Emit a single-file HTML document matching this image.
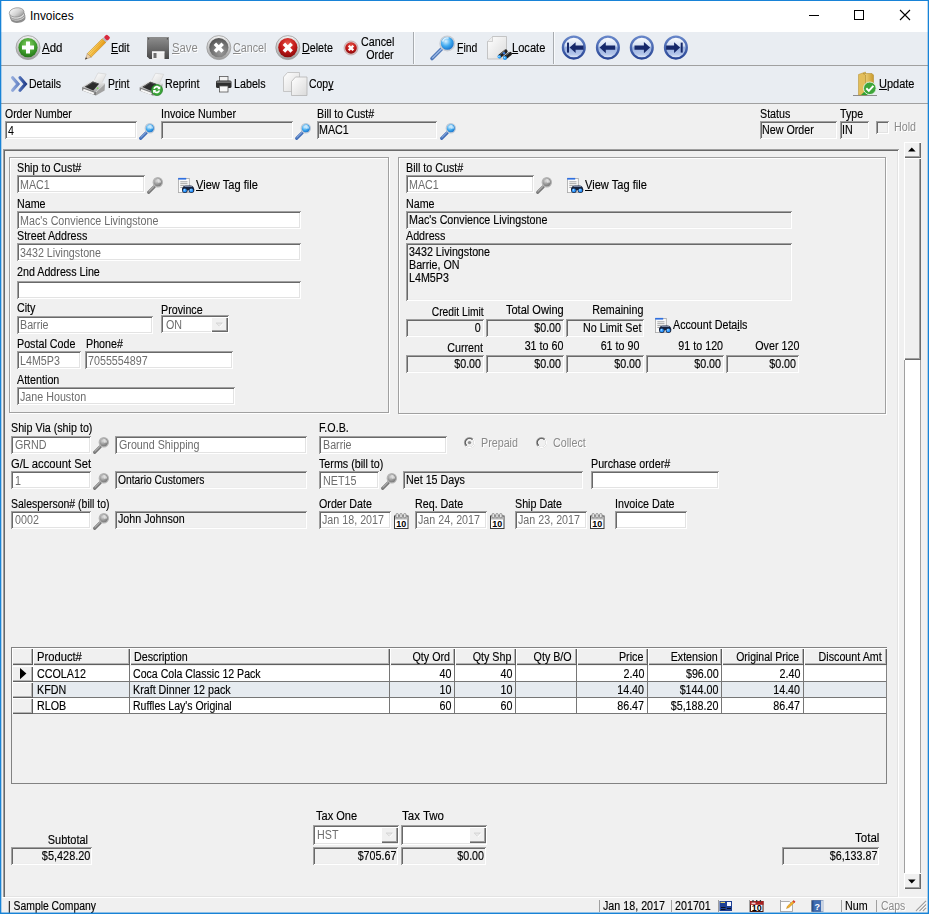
<!DOCTYPE html>
<html lang="en">
<head>
<meta charset="utf-8">
<title>Invoices</title>
<style>
html,body{margin:0;padding:0}
body{width:929px;height:914px;position:relative;overflow:hidden;background:#F0F0F0;font:12px "Liberation Sans",sans-serif;color:#000}
.a{position:absolute}
.t{-webkit-text-stroke:.15px;position:absolute;white-space:nowrap;line-height:14px;height:14px;transform:scaleX(.893);transform-origin:0 0}
.t.r{transform-origin:100% 0;text-align:right}
.t u{text-decoration:underline;text-underline-offset:1px;text-decoration-thickness:1px;text-decoration-skip-ink:none}
.dis{color:#6D6D6D}
.dt{color:#8A8A8A;text-shadow:1px 1px 0 #fff;-webkit-text-stroke:0}
svg{position:absolute;overflow:visible}
.in{position:absolute;height:18px;box-sizing:border-box;background:#fff;box-shadow:inset 1px 1px 0 #A0A0A0,inset -1px -1px 0 #fff,inset 2px 2px 0 #696969,inset -2px -2px 0 #E3E3E3}
.in.g{background:#F0F0F0;box-shadow:inset 1px 1px 0 #A0A0A0,inset -1px -1px 0 #fff,inset 2px 2px 0 #696969,inset -2px -2px 0 #EDEDED}
.in .t{color:#6D6D6D;-webkit-text-stroke:0}
.in.g .t{color:#000;-webkit-text-stroke:.15px}
.grp{position:absolute;box-sizing:border-box;border:1px solid #A0A0A0;box-shadow:1px 1px 0 #fff,inset 1px 1px 0 #fff}
.dd{position:absolute;width:17px;height:15px;box-sizing:border-box;background:#F0F0F0;box-shadow:inset 1px 1px 0 #fff,inset -1px -1px 0 #696969,inset -2px -2px 0 #A0A0A0}
.hc{position:absolute;top:648px;height:17px;box-sizing:border-box;background:#F0F0F0;box-shadow:inset 1px 1px 0 #fff,inset -1px -1px 0 #5E5E5E,inset -2px -2px 0 #B4B4B4}
.rc{position:absolute;height:16px;box-sizing:border-box;background:#F0F0F0;left:12px;width:21px;box-shadow:inset 1px 1px 0 #fff,inset -1px -1px 0 #5E5E5E,inset -2px -2px 0 #B4B4B4}
.row{position:absolute;left:33px;width:853px;height:16px;background:#fff;border-bottom:1px solid #767676;box-sizing:border-box}
.row.alt{background:#E6EBF0}
.vl{position:absolute;width:1px;background:#767676;top:665px;height:48px}
.sep{position:absolute;width:1px;background:#A0A0A0;top:900px;height:12px}
</style>
</head>
<body>
<!-- window frame -->
<div class="a" style="left:0;top:0;width:929px;height:32px;background:#fff"></div>
<div class="a" style="left:0;top:32px;width:929px;height:72px;background:#E9EDF2"></div>
<div class="a" style="left:0;top:65px;width:929px;height:1px;background:#A0A0A0"></div>
<div class="a" style="left:0;top:103px;width:929px;height:1px;background:#A0A0A0"></div>

<!-- TITLEBAR -->
<svg style="left:8px;top:6px" width="18" height="18" viewBox="0 0 18 18">
<defs><linearGradient id="cg" x1="0" y1="0" x2="1" y2="1"><stop offset="0" stop-color="#FFFFFF"/><stop offset=".55" stop-color="#D2D2D2"/><stop offset="1" stop-color="#8A8A8A"/></linearGradient></defs>
<g transform="rotate(-8 9 9)">
<ellipse cx="9.6" cy="12.8" rx="7.4" ry="4.2" fill="#8E8E8E"/>
<ellipse cx="9.4" cy="11" rx="7.4" ry="4.2" fill="#C9C9C9" stroke="#7E7E7E" stroke-width=".7"/>
<ellipse cx="9.2" cy="9" rx="7.4" ry="4.2" fill="#DDDDDD" stroke="#7E7E7E" stroke-width=".7"/>
<ellipse cx="9" cy="6.4" rx="7.4" ry="4.6" fill="url(#cg)" stroke="#8C8C8C" stroke-width=".7"/>
</g>
</svg>
<span class="a" style="left:30px;top:8px;line-height:16px;font-size:11.9px;white-space:nowrap">Invoices</span>
<svg style="left:809px;top:9px" width="102" height="12" viewBox="0 0 102 12">
<path d="M0 6.5H10" stroke="#000" stroke-width="1" fill="none"/>
<rect x="45.5" y="1.5" width="9" height="9" stroke="#000" stroke-width="1" fill="none"/>
<path d="M91 1L101 11M101 1L91 11" stroke="#000" stroke-width="1.1" fill="none"/>
</svg>

<!-- TOOLBAR 1 -->
<div id="tb1">
<svg style="left:0;top:0" width="929" height="104" viewBox="0 0 929 104">
<defs>
<linearGradient id="ring" x1="0" y1="0" x2="0" y2="1"><stop offset="0" stop-color="#F2F2F2"/><stop offset="1" stop-color="#9C9C9C"/></linearGradient>
<radialGradient id="grn" cx=".5" cy=".35" r=".7"><stop offset="0" stop-color="#8ED46A"/><stop offset=".6" stop-color="#3C9A2A"/><stop offset="1" stop-color="#1F6E14"/></radialGradient>
<radialGradient id="gry" cx=".6" cy=".75" r=".8"><stop offset="0" stop-color="#9A9A9A"/><stop offset=".6" stop-color="#707070"/><stop offset="1" stop-color="#4E4E4E"/></radialGradient><linearGradient id="flp" x1="0" y1="0" x2="0" y2="1"><stop offset="0" stop-color="#909090"/><stop offset="1" stop-color="#484848"/></linearGradient><linearGradient id="flq" x1="0" y1="0" x2="0" y2="1"><stop offset="0" stop-color="#8E8E8E"/><stop offset="1" stop-color="#6A6A6A"/></linearGradient>
<radialGradient id="red" cx=".5" cy=".3" r=".75"><stop offset="0" stop-color="#E8564A"/><stop offset=".55" stop-color="#C01818"/><stop offset="1" stop-color="#7E0808"/></radialGradient>
<linearGradient id="nav" x1="0" y1="0" x2="0" y2="1"><stop offset="0" stop-color="#FFFFFF"/><stop offset=".42" stop-color="#D2DEF2"/><stop offset=".5" stop-color="#98B0DE"/><stop offset=".8" stop-color="#B4C6EA"/><stop offset="1" stop-color="#EEF3FB"/></linearGradient><linearGradient id="navr" x1="0" y1="0" x2="0" y2="1"><stop offset="0" stop-color="#6685C8"/><stop offset="1" stop-color="#2A4796"/></linearGradient>
<radialGradient id="lens" cx=".4" cy=".35" r=".7"><stop offset="0" stop-color="#D8F1FF"/><stop offset=".5" stop-color="#3DA9F0"/><stop offset="1" stop-color="#0F63C0"/></radialGradient>
<radialGradient id="lensg" cx=".4" cy=".35" r=".7"><stop offset="0" stop-color="#DADADA"/><stop offset=".5" stop-color="#9A9A9A"/><stop offset="1" stop-color="#6C6C6C"/></radialGradient>
<linearGradient id="pg" x1="0" y1="0" x2="1" y2="1"><stop offset="0" stop-color="#FFFFFF"/><stop offset="1" stop-color="#DADADA"/></linearGradient>
<linearGradient id="pen" x1="0" y1="0" x2="1" y2="1"><stop offset="0" stop-color="#FFE07A"/><stop offset="1" stop-color="#E8960C"/></linearGradient>
<linearGradient id="fold" x1="0" y1="0" x2="1" y2="0"><stop offset="0" stop-color="#F6DC8A"/><stop offset="1" stop-color="#C99A2C"/></linearGradient>
</defs>
<!-- Add -->
<circle cx="28" cy="47.6" r="12" fill="url(#ring)" stroke="#9A9A9A" stroke-width=".8"/>
<circle cx="28" cy="47.6" r="9.6" fill="url(#grn)"/>
<path d="M26 41.6h4v4h4v4h-4v4h-4v-4h-4v-4h4z" fill="#fff"/>
<!-- Edit pencil -->
<g transform="translate(97 47.6) rotate(-45)">
<rect x="-11" y="-2.6" width="21" height="5.2" fill="url(#pen)" stroke="#B87A10" stroke-width=".5"/>
<path d="M-11 -1h21M-11 .9h21" stroke="#D89A20" stroke-width=".5"/>
<path d="M-11 -2.6L-16.5 0L-11 2.6z" fill="#EBCFA8" stroke="#9A7A50" stroke-width=".4"/>
<path d="M-14.6 -.9L-17 0L-14.6 .9z" fill="#333"/>
<rect x="10" y="-2.6" width="2" height="5.2" fill="#B8B8B8"/>
<rect x="12" y="-2.6" width="4.4" height="5.2" rx="1.4" fill="#D8283C"/>
</g>
<!-- Save -->
<path d="M147 37h22v22h-19.5l-2.5-2.5z" fill="url(#flp)"/>
<rect x="150.5" y="37" width="15" height="11.5" fill="url(#flq)"/>
<rect x="148" y="38" width="1.2" height="1.6" fill="#555"/><rect x="166.8" y="38" width="1.2" height="1.6" fill="#555"/>
<rect x="152" y="51.5" width="12.5" height="7.5" fill="#EFEFEF"/>
<rect x="152" y="51.5" width="12.5" height="1" fill="#fff"/>
<rect x="153.5" y="53" width="3" height="5" fill="#6E6E6E"/>
<!-- Cancel -->
<circle cx="218.8" cy="47.6" r="12" fill="url(#ring)" stroke="#9A9A9A" stroke-width=".8"/>
<circle cx="218.8" cy="47.6" r="9.6" fill="url(#gry)"/>
<path d="M214.9 43.7l7.8 7.8M222.7 43.7l-7.8 7.8" stroke="#fff" stroke-width="3.5"/>
<!-- Delete -->
<circle cx="287.8" cy="47.6" r="12" fill="url(#ring)" stroke="#9A9A9A" stroke-width=".8"/>
<circle cx="287.8" cy="47.6" r="9.6" fill="url(#red)"/>
<path d="M283.9 43.7l7.8 7.8M291.7 43.7l-7.8 7.8" stroke="#fff" stroke-width="3.5"/>
<!-- Cancel order -->
<circle cx="351" cy="48" r="7" fill="#E0C8C8" stroke="#B09090" stroke-width=".6"/>
<circle cx="351" cy="48" r="5.8" fill="url(#red)"/>
<path d="M348.7 45.7l4.6 4.6M353.3 45.7l-4.6 4.6" stroke="#fff" stroke-width="2.3"/>
<!-- separators -->
<rect x="413" y="32" width="1" height="32" fill="#A8ACB0"/><rect x="414" y="32" width="1" height="32" fill="#F8FAFC"/>
<rect x="553" y="32" width="1" height="32" fill="#A8ACB0"/><rect x="554" y="32" width="1" height="32" fill="#F8FAFC"/>
<!-- Find -->
<path d="M432 58.5L442.5 48" stroke="#4F78B8" stroke-width="3.6" stroke-linecap="round"/>
<path d="M432.6 57.9L442 48.5" stroke="#9DBBE6" stroke-width="1.2" stroke-linecap="round"/>
<circle cx="447.3" cy="43.4" r="7.2" fill="url(#lens)" stroke="#C9CDD4" stroke-width="1.6"/>
<path d="M442.6 41.5a5 5 0 0 1 6-3.4" stroke="#fff" stroke-width="1.4" fill="none" opacity=".8"/>
<!-- Locate -->
<path d="M492.5 36.5h14v22.5h-19v-17.5z" fill="url(#pg)" stroke="#B9B9B9" stroke-width=".8"/>
<path d="M492.5 36.5v5h-5" fill="#EFEFEF" stroke="#B9B9B9" stroke-width=".6"/>
<g><path d="M499.7 56.3L505.8 51.3" stroke="#202020" stroke-width="3.7" stroke-linecap="round"/>
<path d="M505.3 57.5L510 53.7" stroke="#202020" stroke-width="3.9" stroke-linecap="round"/>
<path d="M500.2 54.3L505 50.5M506.2 55.2L509.8 52.3" stroke="#8C8C8C" stroke-width=".8"/>
<circle cx="504" cy="53.2" r="1.2" fill="#3E7FD8"/>
<circle cx="499.3" cy="56.8" r="1.8" fill="#2CA4FF"/><circle cx="504.9" cy="58" r="1.9" fill="#2CA4FF"/>
<circle cx="498.9" cy="56.4" r=".7" fill="#B8E6FF"/><circle cx="504.5" cy="57.6" r=".7" fill="#B8E6FF"/></g>
<!-- Nav -->
<g fill="url(#nav)" stroke="url(#navr)" stroke-width="2.3">
<circle cx="573.8" cy="47.6" r="10.9"/><circle cx="607.9" cy="47.6" r="10.9"/><circle cx="641.8" cy="47.6" r="10.9"/><circle cx="675.9" cy="47.6" r="10.9"/>
</g>
<g fill="#16286A">
<rect x="567" y="42.6" width="2" height="10"/><path d="M569.6 47.6l6-5.4v3.3h8v4.2h-8v3.3z"/>
<path d="M599.6 47.6l6.2-5.6v3.4h9.4v4.4h-9.4v3.4z"/>
<path d="M650.1 47.6l-6.2-5.6v3.4h-9.4v4.4h9.4v3.4z"/>
<rect x="680.7" y="42.6" width="2" height="10"/><path d="M680.1 47.6l-6-5.4v3.3h-8v4.2h8v3.3z"/>
</g>
</svg>
<span class="t" style="left:42px;top:41px;transform:scaleX(0.954)"><u>A</u>dd</span>
<span class="t" style="left:111px;top:41px"><u>E</u>dit</span>
<span class="t dt" style="left:172px;top:41px;transform:scaleX(0.942)"><u>S</u>ave</span>
<span class="t dt" style="left:233px;top:41px"><u>C</u>ancel</span>
<span class="t" style="left:302px;top:41px"><u>D</u>elete</span>
<span class="t r" style="right:535px;top:35px">Cancel</span>
<span class="t r" style="right:535px;top:48px">Order</span>
<span class="t" style="left:457px;top:41px;transform:scaleX(0.869)"><u>F</u>ind</span>
<span class="t" style="left:512px;top:41px;transform:scaleX(0.924)"><u>L</u>ocate</span>
</div>
<!-- TOOLBAR 2 -->
<div id="tb2">
<svg style="left:0;top:0" width="929" height="104" viewBox="0 0 929 104">
<defs>
<linearGradient id="chev" gradientUnits="userSpaceOnUse" x1="18" y1="84" x2="27" y2="84"><stop offset="0" stop-color="#5C7EC6"/><stop offset="1" stop-color="#1B3580"/></linearGradient><linearGradient id="chev1" gradientUnits="userSpaceOnUse" x1="11" y1="84" x2="20" y2="84"><stop offset="0" stop-color="#9DB3E0"/><stop offset="1" stop-color="#5A7AC0"/></linearGradient>
<linearGradient id="prn" x1="0" y1="0" x2="0" y2="1"><stop offset="0" stop-color="#F4F4F4"/><stop offset="1" stop-color="#A8A8A8"/></linearGradient>
</defs>
<!-- Details chevrons -->
<path d="M12.6 77.8L18 84L12.6 90.2" stroke="url(#chev1)" stroke-width="3.2" stroke-linecap="round" fill="none"/>
<path d="M20 77.8L25.4 84L20 90.2" stroke="url(#chev)" stroke-width="3.2" stroke-linecap="round" fill="none"/>
<!-- Print -->
<g>
<path d="M98 73l8.2 1l-4 8.6l-8.7-1.1z" fill="url(#pg)" stroke="#C8C8C8" stroke-width=".5"/>
<path d="M82.2 87l10.8-7.5l12 4l-9 8.5z" fill="url(#prn)"/>
<path d="M84.8 86.8l8-5.4l6.4 2.4l-6 6.6z" fill="#2C2C2C"/>
<path d="M86.5 86.3l6.4-4.3l4.3 1.6" stroke="#6A6A6A" stroke-width=".8" fill="none"/>
<path d="M82.2 87l13.8 5v3.5l-13.8-5z" fill="#7C7C7C"/>
<path d="M83.6 88.8l10.8 3.9l-.8 1.9l-10.6-3.9z" fill="#F6F6F6"/>
<path d="M96 92l9-8.5l-.4 7l-8.6 5z" fill="#A2A2A2"/>
<path d="M96 92l9-8.5" stroke="#D8D8D8" stroke-width=".7"/>
<circle cx="97.6" cy="88.2" r=".9" fill="#7CE05A"/>
</g>
<!-- Reprint -->
<g transform="translate(57.5 .3)">
<path d="M98 73l8.2 1l-4 8.6l-8.7-1.1z" fill="url(#pg)" stroke="#C8C8C8" stroke-width=".5"/>
<path d="M82.2 87l10.8-7.5l12 4l-9 8.5z" fill="url(#prn)"/>
<path d="M84.8 86.8l8-5.4l6.4 2.4l-6 6.6z" fill="#2C2C2C"/>
<path d="M86.5 86.3l6.4-4.3l4.3 1.6" stroke="#6A6A6A" stroke-width=".8" fill="none"/>
<path d="M82.2 87l13.8 5v3.5l-13.8-5z" fill="#7C7C7C"/>
<path d="M83.6 88.8l10.8 3.9l-.8 1.9l-10.6-3.9z" fill="#F6F6F6"/>
<path d="M96 92l9-8.5l-.4 7l-8.6 5z" fill="#A2A2A2"/>
<path d="M96 92l9-8.5" stroke="#D8D8D8" stroke-width=".7"/>
<circle cx="97.6" cy="88.2" r=".9" fill="#7CE05A"/>
</g>
<circle cx="157" cy="90" r="5.5" fill="#3DA63A" stroke="#1E7A20" stroke-width=".7"/>
<path d="M153.3 88.8a3.5 3.5 0 0 1 6-1.8l1-1v3.2h-3.2l1-1a2 2 0 0 0-3.3 .8zM160.1 90.4a3.5 3.5 0 0 1-6 1.8l-1 1v-3.2h3.2l-1 1a2 2 0 0 0 3.3-.8z" fill="#fff"/>
<!-- Labels -->
<rect x="219.5" y="76.5" width="8.5" height="5" fill="#F2F2F2" stroke="#555" stroke-width=".8"/>
<rect x="216" y="80.5" width="15.5" height="7.5" rx="1.5" fill="#2E2E2E"/>
<rect x="216.6" y="81.3" width="14.3" height="1.6" fill="#777"/>
<rect x="219.5" y="86" width="8.5" height="6" fill="#F8F8F8" stroke="#555" stroke-width=".8"/>
<!-- Copy -->
<path d="M283.5 77l4-4.5h12v19h-16z" fill="url(#pg)" stroke="#BDBDBD" stroke-width=".8"/>
<path d="M291.5 81.5l4-4.5h11.5v18.5h-15.5z" fill="url(#pg)" stroke="#B4B4B4" stroke-width=".8"/>
<!-- Update -->
<rect x="853" y="95" width="24" height="1" fill="#8C8C8C"/>
<path d="M858.5 74.5l7-2.5v23h-7z" fill="#E3BE5A" stroke="#B08A28" stroke-width=".5"/>
<path d="M863 73.5h9l1.5 1.5v17l-8 3v-20z" fill="url(#fold)" stroke="#A88424" stroke-width=".5"/>
<path d="M861 95l3.5-3.5l3.5 3.5z" fill="#2FA030"/>
<circle cx="869.8" cy="88.3" r="6.3" fill="#3DA63A" stroke="#E8F4E8" stroke-width=".9"/>
<path d="M866.3 88.3l2.5 2.6l4.6-5" stroke="#fff" stroke-width="2" fill="none"/>
</svg>
<span class="t" style="left:28.8px;top:77px;transform:scaleX(0.875)">Details</span>
<span class="t" style="left:108px;top:77px;transform:scaleX(0.87)">P<u>r</u>int</span>
<span class="t" style="left:165px;top:77px">Reprint</span>
<span class="t" style="left:233.8px;top:77px">Labels</span>
<span class="t" style="left:308.8px;top:77px;transform:scaleX(0.871)">Cop<u>y</u></span>
<span class="t" style="left:879px;top:77px;transform:scaleX(0.917)"><u>U</u>pdate</span>
</div>
<!-- HEADER FIELDS -->
<div id="hdr">
<span class="t" style="left:5px;top:107px;transform:scaleX(0.871)">Order Number</span>
<div class="in" style="left:5px;top:121px;width:132px"><span class="t" style="color:#000;left:3px;top:3px">4</span></div>
<svg style="left:139px;top:122.5px" width="17" height="17" viewBox="0 0 17 17"><path d="M1.6 15.4L7.4 9.6" stroke="#3F6DB8" stroke-width="3" stroke-linecap="round"/><path d="M1.9 14.5L6.9 9.5" stroke="#A9C4EC" stroke-width=".9" stroke-linecap="round"/><circle cx="10.8" cy="5.3" r="4.6" fill="url(#lens)" stroke="#BFC9D6" stroke-width="1.2"/><path d="M10.2 1.9a3.6 3.6 0 0 1 4 3.6l-3.2 .2z" fill="#fff" opacity=".55"/></svg>
<span class="t" style="left:161px;top:107px">Invoice Number</span>
<div class="in g" style="left:161px;top:121px;width:132px"></div>
<svg style="left:295px;top:122.5px" width="17" height="17" viewBox="0 0 17 17"><path d="M1.6 15.4L7.4 9.6" stroke="#3F6DB8" stroke-width="3" stroke-linecap="round"/><path d="M1.9 14.5L6.9 9.5" stroke="#A9C4EC" stroke-width=".9" stroke-linecap="round"/><circle cx="10.8" cy="5.3" r="4.6" fill="url(#lens)" stroke="#BFC9D6" stroke-width="1.2"/><path d="M10.2 1.9a3.6 3.6 0 0 1 4 3.6l-3.2 .2z" fill="#fff" opacity=".55"/></svg>
<span class="t" style="left:317px;top:107px">Bill to Cust#</span>
<div class="in g" style="left:317px;top:121px;width:120px"><span class="t" style="left:2px;top:1.5px">MAC1</span></div>
<svg style="left:440px;top:122.5px" width="17" height="17" viewBox="0 0 17 17"><path d="M1.6 15.4L7.4 9.6" stroke="#3F6DB8" stroke-width="3" stroke-linecap="round"/><path d="M1.9 14.5L6.9 9.5" stroke="#A9C4EC" stroke-width=".9" stroke-linecap="round"/><circle cx="10.8" cy="5.3" r="4.6" fill="url(#lens)" stroke="#BFC9D6" stroke-width="1.2"/><path d="M10.2 1.9a3.6 3.6 0 0 1 4 3.6l-3.2 .2z" fill="#fff" opacity=".55"/></svg>
<span class="t" style="left:760px;top:107px">Status</span>
<div class="in g" style="left:760px;top:121px;width:77px"><span class="t" style="left:2px;top:1.5px">New Order</span></div>
<span class="t" style="left:840px;top:107px">Type</span>
<div class="in g" style="left:840px;top:121px;width:29px"><span class="t" style="left:2px;top:1.5px">IN</span></div>
<div class="a" style="left:876px;top:121px;width:13px;height:13px;box-sizing:border-box;background:#F0F0F0;box-shadow:inset 1px 1px 0 #A0A0A0,inset -1px -1px 0 #fff,inset 2px 2px 0 #696969,inset -2px -2px 0 #E3E3E3"></div>
<span class="t dt" style="left:893.8px;top:120px">Hold</span>
</div>
<!-- SCROLL AREA -->
<div id="sa">
<div class="a" style="left:3px;top:149px;width:896px;height:749px;box-sizing:border-box;box-shadow:inset 1px 1px 0 #A0A0A0,inset -1px -1px 0 #fff,inset 2px 2px 0 #696969,inset -2px -2px 0 #E3E3E3"></div>
<div class="grp" style="left:9px;top:157px;width:380px;height:256px"></div>
<span class="t" style="left:16.8px;top:161px">Ship to Cust#</span>
<div class="in" style="left:17px;top:175px;width:128px"><span class="t" style="left:3px;top:3px">MAC1</span></div>
<svg style="left:147px;top:176.5px" width="17" height="17" viewBox="0 0 17 17"><path d="M1.6 15.4L7.4 9.6" stroke="#777777" stroke-width="3" stroke-linecap="round"/><path d="M1.9 14.5L6.9 9.5" stroke="#CFCFCF" stroke-width=".9" stroke-linecap="round"/><circle cx="10.8" cy="5.3" r="4.6" fill="url(#lensg)" stroke="#B4B4B4" stroke-width="1.2"/><path d="M10.2 1.9a3.6 3.6 0 0 1 4 3.6l-3.2 .2z" fill="#fff" opacity=".55"/></svg>
<svg style="left:178px;top:176.5px" width="17" height="17" viewBox="0 0 17 17"><rect x=".5" y="1.4" width="10.8" height="14.2" fill="#FAFAFA" stroke="#A8A8A8" stroke-width=".8"/><rect x=".2" y=".9" width="8" height="1.7" fill="#2F6FE0"/><path d="M2.3 4.8h7.2M2.3 6.7h7.2M2.3 8.6h4M2.3 10.5h2.5" stroke="#9C9C9C" stroke-width=".9"/><path d="M4 13q.3-4.6 3.8-4.6h4.6q3.5 0 3.8 4.6z" fill="#17233E"/><circle cx="6.9" cy="13" r="2.9" fill="#17233E"/><circle cx="13.4" cy="13" r="2.9" fill="#17233E"/><path d="M6.5 9.5h7.5" stroke="#7F8DAA" stroke-width=".9"/><circle cx="6.8" cy="13.4" r="1.9" fill="#2C96FF"/><circle cx="13.3" cy="13.4" r="1.9" fill="#2C96FF"/><circle cx="6.4" cy="12.9" r=".8" fill="#A8DCFF"/><circle cx="12.9" cy="12.9" r=".8" fill="#A8DCFF"/></svg>
<span class="t" style="left:196px;top:178px;transform:scaleX(0.923)"><u>V</u>iew Tag file</span>
<span class="t" style="left:16.8px;top:197px">Name</span>
<div class="in" style="left:17px;top:211px;width:284px"><span class="t" style="left:3px;top:3px">Mac's Convience Livingstone</span></div>
<span class="t" style="left:16.8px;top:229px">Street Address</span>
<div class="in" style="left:17px;top:243px;width:284px"><span class="t" style="left:3px;top:3px">3432 Livingstone</span></div>
<span class="t" style="left:16.8px;top:265px">2nd Address Line</span>
<div class="in" style="left:17px;top:281px;width:284px"></div>
<span class="t" style="left:16.8px;top:301px">City</span>
<div class="in" style="left:17px;top:316px;width:136px"><span class="t" style="left:3px;top:2px">Barrie</span></div>
<span class="t" style="left:160.8px;top:303px">Province</span>
<div class="in" style="left:161px;top:315px;width:68px"><span class="t" style="left:4.5px;top:2.6px">ON</span></div>
<div class="dd" style="left:211px;top:317px"><svg style="left:4px;top:5px" width="10" height="6" viewBox="0 0 10 6"><path d="M1.5 1.5h7l-3.5 3.8z" fill="#fff"/><path d="M.8 .8h7l-3.5 3.8z" fill="#BDBDBD"/><path d="M1.6 1.3h5.4l-2.7 2.9z" fill="#E9E9E9"/></svg></div>
<span class="t" style="left:16.8px;top:337px">Postal Code</span>
<div class="in" style="left:17px;top:351px;width:64px"><span class="t" style="left:3px;top:3px">L4M5P3</span></div>
<span class="t" style="left:86px;top:337px">Phone#</span>
<div class="in" style="left:85px;top:351px;width:148px"><span class="t" style="left:3px;top:3px">7055554897</span></div>
<span class="t" style="left:16.8px;top:373px">Attention</span>
<div class="in" style="left:17px;top:387px;width:218px"><span class="t" style="left:3px;top:3px">Jane Houston</span></div>
<div class="grp" style="left:398px;top:157px;width:488px;height:257px"></div>
<span class="t" style="left:405.8px;top:161px">Bill to Cust#</span>
<div class="in" style="left:406px;top:175px;width:128px"><span class="t" style="left:3px;top:3px">MAC1</span></div>
<svg style="left:536px;top:176.5px" width="17" height="17" viewBox="0 0 17 17"><path d="M1.6 15.4L7.4 9.6" stroke="#777777" stroke-width="3" stroke-linecap="round"/><path d="M1.9 14.5L6.9 9.5" stroke="#CFCFCF" stroke-width=".9" stroke-linecap="round"/><circle cx="10.8" cy="5.3" r="4.6" fill="url(#lensg)" stroke="#B4B4B4" stroke-width="1.2"/><path d="M10.2 1.9a3.6 3.6 0 0 1 4 3.6l-3.2 .2z" fill="#fff" opacity=".55"/></svg>
<svg style="left:566.5px;top:176.5px" width="17" height="17" viewBox="0 0 17 17"><rect x=".5" y="1.4" width="10.8" height="14.2" fill="#FAFAFA" stroke="#A8A8A8" stroke-width=".8"/><rect x=".2" y=".9" width="8" height="1.7" fill="#2F6FE0"/><path d="M2.3 4.8h7.2M2.3 6.7h7.2M2.3 8.6h4M2.3 10.5h2.5" stroke="#9C9C9C" stroke-width=".9"/><path d="M4 13q.3-4.6 3.8-4.6h4.6q3.5 0 3.8 4.6z" fill="#17233E"/><circle cx="6.9" cy="13" r="2.9" fill="#17233E"/><circle cx="13.4" cy="13" r="2.9" fill="#17233E"/><path d="M6.5 9.5h7.5" stroke="#7F8DAA" stroke-width=".9"/><circle cx="6.8" cy="13.4" r="1.9" fill="#2C96FF"/><circle cx="13.3" cy="13.4" r="1.9" fill="#2C96FF"/><circle cx="6.4" cy="12.9" r=".8" fill="#A8DCFF"/><circle cx="12.9" cy="12.9" r=".8" fill="#A8DCFF"/></svg>
<span class="t" style="left:585px;top:178px;transform:scaleX(0.923)"><u>V</u>iew Tag file</span>
<span class="t" style="left:405.8px;top:197px">Name</span>
<div class="in g" style="left:406px;top:211px;width:386px"><span class="t" style="left:2.5px;top:1.5px">Mac's Convience Livingstone</span></div>
<span class="t" style="left:405.8px;top:229px">Address</span>
<div class="in g" style="left:406px;top:243px;width:386px;height:58px"><span class="t" style="left:2.5px;top:2px">3432 Livingstone</span><span class="t" style="left:2.5px;top:15px">Barrie, ON</span><span class="t" style="left:2.5px;top:28px">L4M5P3</span></div>
<span class="t r" style="right:445.5px;top:305px;transform:scaleX(0.856)">Credit Limit</span>
<span class="t r" style="right:365.5px;top:303px;transform:scaleX(0.922)">Total Owing</span>
<span class="t r" style="right:285.5px;top:303px">Remaining</span>
<div class="in g" style="left:406px;top:319px;width:78px"><span class="t r" style="right:3px;top:2px">0</span></div>
<div class="in g" style="left:486px;top:319px;width:78px"><span class="t r" style="right:3px;top:2px">$0.00</span></div>
<div class="in g" style="left:566px;top:319px;width:78px"><span class="t r" style="right:3px;top:2px">No Limit Set</span></div>
<svg style="left:655px;top:316.5px" width="17" height="17" viewBox="0 0 17 17"><rect x=".5" y="1.4" width="10.8" height="14.2" fill="#FAFAFA" stroke="#A8A8A8" stroke-width=".8"/><rect x=".2" y=".9" width="8" height="1.7" fill="#2F6FE0"/><path d="M2.3 4.8h7.2M2.3 6.7h7.2M2.3 8.6h4M2.3 10.5h2.5" stroke="#9C9C9C" stroke-width=".9"/><path d="M4 13q.3-4.6 3.8-4.6h4.6q3.5 0 3.8 4.6z" fill="#17233E"/><circle cx="6.9" cy="13" r="2.9" fill="#17233E"/><circle cx="13.4" cy="13" r="2.9" fill="#17233E"/><path d="M6.5 9.5h7.5" stroke="#7F8DAA" stroke-width=".9"/><circle cx="6.8" cy="13.4" r="1.9" fill="#2C96FF"/><circle cx="13.3" cy="13.4" r="1.9" fill="#2C96FF"/><circle cx="6.4" cy="12.9" r=".8" fill="#A8DCFF"/><circle cx="12.9" cy="12.9" r=".8" fill="#A8DCFF"/></svg>
<span class="t" style="left:673px;top:318px">Account Deta<u>i</u>ls</span>
<span class="t r" style="right:445.5px;top:341px">Current</span>
<span class="t r" style="right:365.5px;top:339px">31 to 60</span>
<span class="t r" style="right:289.5px;top:339px">61 to 90</span>
<span class="t r" style="right:205.5px;top:339px">91 to 120</span>
<span class="t r" style="right:130px;top:339px">Over 120</span>
<div class="in g" style="left:406px;top:355px;width:78px"><span class="t r" style="right:3px;top:1.5px">$0.00</span></div>
<div class="in g" style="left:486px;top:355px;width:78px"><span class="t r" style="right:3px;top:1.5px">$0.00</span></div>
<div class="in g" style="left:566px;top:355px;width:78px"><span class="t r" style="right:3px;top:1.5px">$0.00</span></div>
<div class="in g" style="left:646px;top:355px;width:78px"><span class="t r" style="right:3px;top:1.5px">$0.00</span></div>
<div class="in g" style="left:726px;top:355px;width:73px"><span class="t r" style="right:3px;top:1.5px">$0.00</span></div>
<span class="t" style="left:10.8px;top:421px">Ship Via (ship to)</span>
<div class="in" style="left:11px;top:436px;width:80px"><span class="t" style="left:3.5px;top:2px">GRND</span></div>
<svg style="left:93px;top:436.5px" width="17" height="17" viewBox="0 0 17 17"><path d="M1.6 15.4L7.4 9.6" stroke="#777777" stroke-width="3" stroke-linecap="round"/><path d="M1.9 14.5L6.9 9.5" stroke="#CFCFCF" stroke-width=".9" stroke-linecap="round"/><circle cx="10.8" cy="5.3" r="4.6" fill="url(#lensg)" stroke="#B4B4B4" stroke-width="1.2"/><path d="M10.2 1.9a3.6 3.6 0 0 1 4 3.6l-3.2 .2z" fill="#fff" opacity=".55"/></svg>
<div class="in" style="left:115px;top:436px;width:192px"><span class="t" style="left:3.5px;top:2px">Ground Shipping</span></div>
<span class="t" style="left:318.8px;top:421px">F.O.B.</span>
<div class="in" style="left:319px;top:436px;width:128px"><span class="t" style="left:3.5px;top:2px">Barrie</span></div>
<svg style="left:463px;top:436px" width="90" height="14" viewBox="0 0 90 14"><circle cx="6.5" cy="6.6" r="5" fill="#F0F0F0" stroke="#A0A0A0" stroke-width="1.2"/><path d="M2.9 10.2A5 5 0 0 0 10.1 3" stroke="#fff" stroke-width="1.2" fill="none"/><path d="M3.6 9.5A4 4 0 0 1 9.4 3.7" stroke="#505050" stroke-width="1.1" fill="none"/><circle cx="6.5" cy="6.6" r="1.7" fill="#909090"/><circle cx="78.5" cy="6.6" r="5" fill="#F0F0F0" stroke="#A0A0A0" stroke-width="1.2"/><path d="M74.9 10.2A5 5 0 0 0 82.1 3" stroke="#fff" stroke-width="1.2" fill="none"/><path d="M75.6 9.5A4 4 0 0 1 81.4 3.7" stroke="#505050" stroke-width="1.1" fill="none"/></svg>
<span class="t dt" style="left:480.8px;top:436px">Prepaid</span>
<span class="t dt" style="left:552.8px;top:436px">Collect</span>
<span class="t" style="left:10.8px;top:457px;transform:scaleX(0.936)">G/L account Set</span>
<div class="in" style="left:11px;top:471px;width:80px"><span class="t" style="left:3.5px;top:3px">1</span></div>
<svg style="left:93px;top:472.5px" width="17" height="17" viewBox="0 0 17 17"><path d="M1.6 15.4L7.4 9.6" stroke="#777777" stroke-width="3" stroke-linecap="round"/><path d="M1.9 14.5L6.9 9.5" stroke="#CFCFCF" stroke-width=".9" stroke-linecap="round"/><circle cx="10.8" cy="5.3" r="4.6" fill="url(#lensg)" stroke="#B4B4B4" stroke-width="1.2"/><path d="M10.2 1.9a3.6 3.6 0 0 1 4 3.6l-3.2 .2z" fill="#fff" opacity=".55"/></svg>
<div class="in g" style="left:115px;top:471px;width:192px"><span class="t" style="left:2.5px;top:1.5px;transform:scaleX(0.857)">Ontario Customers</span></div>
<span class="t" style="left:318.8px;top:457px">Terms (bill to)</span>
<div class="in" style="left:319px;top:471px;width:60px"><span class="t" style="left:3.5px;top:3px">NET15</span></div>
<svg style="left:381px;top:472.5px" width="17" height="17" viewBox="0 0 17 17"><path d="M1.6 15.4L7.4 9.6" stroke="#777777" stroke-width="3" stroke-linecap="round"/><path d="M1.9 14.5L6.9 9.5" stroke="#CFCFCF" stroke-width=".9" stroke-linecap="round"/><circle cx="10.8" cy="5.3" r="4.6" fill="url(#lensg)" stroke="#B4B4B4" stroke-width="1.2"/><path d="M10.2 1.9a3.6 3.6 0 0 1 4 3.6l-3.2 .2z" fill="#fff" opacity=".55"/></svg>
<div class="in g" style="left:403px;top:471px;width:180px"><span class="t" style="left:2.5px;top:1.5px">Net 15 Days</span></div>
<span class="t" style="left:590.8px;top:457px">Purchase order#</span>
<div class="in" style="left:591px;top:471px;width:128px"></div>
<span class="t" style="left:10.8px;top:497px;transform:scaleX(0.874)">Salesperson# (bill to)</span>
<div class="in" style="left:11px;top:511px;width:80px"><span class="t" style="left:3.5px;top:2.3px">0002</span></div>
<svg style="left:93px;top:512.5px" width="17" height="17" viewBox="0 0 17 17"><path d="M1.6 15.4L7.4 9.6" stroke="#777777" stroke-width="3" stroke-linecap="round"/><path d="M1.9 14.5L6.9 9.5" stroke="#CFCFCF" stroke-width=".9" stroke-linecap="round"/><circle cx="10.8" cy="5.3" r="4.6" fill="url(#lensg)" stroke="#B4B4B4" stroke-width="1.2"/><path d="M10.2 1.9a3.6 3.6 0 0 1 4 3.6l-3.2 .2z" fill="#fff" opacity=".55"/></svg>
<div class="in g" style="left:115px;top:511px;width:192px"><span class="t" style="left:2.5px;top:1.4px">John Johnson</span></div>
<span class="t" style="left:318.8px;top:497px">Order Date</span>
<div class="in" style="left:319px;top:511px;width:72px"><span class="t" style="left:3px;top:2.3px">Jan 18, 2017</span></div>
<svg style="left:394px;top:512.5px" width="15" height="16" viewBox="0 0 15 16"><rect x=".5" y="3" width="13.5" height="12.5" fill="#fff" stroke="#3C3C3C" stroke-width="1"/><rect x="1" y="3.5" width="12.5" height="3" fill="#B9B9B9"/><g fill="#EDEDED" stroke="#7A7A7A" stroke-width=".8"><rect x="2" y=".6" width="2.4" height="4.2" rx="1"/><rect x="5.8" y=".6" width="2.4" height="4.2" rx="1"/><rect x="9.6" y=".6" width="2.4" height="4.2" rx="1"/></g><text x="7.2" y="14.3" font-family="Liberation Sans, sans-serif" font-size="8.5" font-weight="bold" text-anchor="middle" fill="#000" textLength="10" lengthAdjust="spacingAndGlyphs">10</text></svg>
<span class="t" style="left:414.8px;top:497px">Req. Date</span>
<div class="in" style="left:415px;top:511px;width:72px"><span class="t" style="left:3px;top:2.3px">Jan 24, 2017</span></div>
<svg style="left:490px;top:512.5px" width="15" height="16" viewBox="0 0 15 16"><rect x=".5" y="3" width="13.5" height="12.5" fill="#fff" stroke="#3C3C3C" stroke-width="1"/><rect x="1" y="3.5" width="12.5" height="3" fill="#B9B9B9"/><g fill="#EDEDED" stroke="#7A7A7A" stroke-width=".8"><rect x="2" y=".6" width="2.4" height="4.2" rx="1"/><rect x="5.8" y=".6" width="2.4" height="4.2" rx="1"/><rect x="9.6" y=".6" width="2.4" height="4.2" rx="1"/></g><text x="7.2" y="14.3" font-family="Liberation Sans, sans-serif" font-size="8.5" font-weight="bold" text-anchor="middle" fill="#000" textLength="10" lengthAdjust="spacingAndGlyphs">10</text></svg>
<span class="t" style="left:514.8px;top:497px">Ship Date</span>
<div class="in" style="left:515px;top:511px;width:72px"><span class="t" style="left:3px;top:2.3px">Jan 23, 2017</span></div>
<svg style="left:590px;top:512.5px" width="15" height="16" viewBox="0 0 15 16"><rect x=".5" y="3" width="13.5" height="12.5" fill="#fff" stroke="#3C3C3C" stroke-width="1"/><rect x="1" y="3.5" width="12.5" height="3" fill="#B9B9B9"/><g fill="#EDEDED" stroke="#7A7A7A" stroke-width=".8"><rect x="2" y=".6" width="2.4" height="4.2" rx="1"/><rect x="5.8" y=".6" width="2.4" height="4.2" rx="1"/><rect x="9.6" y=".6" width="2.4" height="4.2" rx="1"/></g><text x="7.2" y="14.3" font-family="Liberation Sans, sans-serif" font-size="8.5" font-weight="bold" text-anchor="middle" fill="#000" textLength="10" lengthAdjust="spacingAndGlyphs">10</text></svg>
<span class="t" style="left:614.8px;top:497px">Invoice Date</span>
<div class="in" style="left:615px;top:511px;width:72px"></div>
<div class="a" style="left:11px;top:647px;width:876px;height:137px;box-sizing:border-box;border:1px solid #828282"></div>
<div class="hc" style="left:12px;width:21px"></div>
<div class="hc" style="left:33px;width:97px"></div>
<div class="hc" style="left:130px;width:260px"></div>
<div class="hc" style="left:390px;width:65px"></div>
<div class="hc" style="left:455px;width:61px"></div>
<div class="hc" style="left:516px;width:61px"></div>
<div class="hc" style="left:577px;width:71px"></div>
<div class="hc" style="left:648px;width:74px"></div>
<div class="hc" style="left:722px;width:82px"></div>
<div class="hc" style="left:804px;width:83px"></div>
<span class="t" style="left:36.8px;top:650px;transform:scaleX(0.933)">Product#</span>
<span class="t" style="left:133.8px;top:650px">Description</span>
<span class="t r" style="right:478.5px;top:650px">Qty Ord</span>
<span class="t r" style="right:417.5px;top:650px">Qty Shp</span>
<span class="t r" style="right:357px;top:650px">Qty B/O</span>
<span class="t r" style="right:285.5px;top:650px">Price</span>
<span class="t r" style="right:211.5px;top:650px">Extension</span>
<span class="t r" style="right:129.5px;top:650px;transform:scaleX(0.872)">Original Price</span>
<span class="t r" style="right:47.5px;top:650px">Discount Amt</span>
<div class="rc" style="top:666px"></div>
<div class="row" style="top:666px"></div>
<span class="t" style="left:37px;top:667px">CCOLA12</span>
<span class="t" style="left:132.8px;top:667px;transform:scaleX(0.882)">Coca Cola Classic 12 Pack</span>
<span class="t r" style="right:478px;top:667px">40</span>
<span class="t r" style="right:416.5px;top:667px">40</span>
<span class="t r" style="right:284.5px;top:667px">2.40</span>
<span class="t r" style="right:210.5px;top:667px">$96.00</span>
<span class="t r" style="right:128.5px;top:667px">2.40</span>
<div class="rc" style="top:682px"></div>
<div class="row alt" style="top:682px"></div>
<span class="t" style="left:37px;top:683px">KFDN</span>
<span class="t" style="left:132.8px;top:683px">Kraft Dinner 12 pack</span>
<span class="t r" style="right:478px;top:683px">10</span>
<span class="t r" style="right:416.5px;top:683px">10</span>
<span class="t r" style="right:284.5px;top:683px">14.40</span>
<span class="t r" style="right:210.5px;top:683px">$144.00</span>
<span class="t r" style="right:128.5px;top:683px">14.40</span>
<div class="rc" style="top:698px"></div>
<div class="row" style="top:698px"></div>
<span class="t" style="left:37px;top:699px">RLOB</span>
<span class="t" style="left:132.8px;top:699px;transform:scaleX(0.874)">Ruffles Lay's Original</span>
<span class="t r" style="right:478px;top:699px">60</span>
<span class="t r" style="right:416.5px;top:699px">60</span>
<span class="t r" style="right:284.5px;top:699px">86.47</span>
<span class="t r" style="right:210.5px;top:699px">$5,188.20</span>
<span class="t r" style="right:128.5px;top:699px">86.47</span>
<div class="vl" style="left:129px"></div>
<div class="vl" style="left:389px"></div>
<div class="vl" style="left:454px"></div>
<div class="vl" style="left:515px"></div>
<div class="vl" style="left:576px"></div>
<div class="vl" style="left:647px"></div>
<div class="vl" style="left:721px"></div>
<div class="vl" style="left:803px"></div>
<svg style="left:20px;top:668px" width="7" height="12" viewBox="0 0 7 12"><path d="M0 0L6.4 5.6L0 11.2z" fill="#000"/></svg>
<span class="t r" style="right:840.5px;top:833px;transform:scaleX(0.915)">Subtotal</span>
<div class="in g" style="left:11px;top:847px;width:81px"><span class="t r" style="right:1.5px;top:2px;transform:scaleX(0.91)">$5,428.20</span></div>
<span class="t" style="left:316px;top:809px;transform:scaleX(0.919)">Tax One</span>
<span class="t" style="left:402px;top:809px;transform:scaleX(0.958)">Tax Two</span>
<div class="in" style="left:313px;top:825px;width:86px;height:20px"><span class="t" style="left:4px;top:2.8px">HST</span></div>
<div class="dd" style="left:381px;top:827px;height:16px"><svg style="left:4px;top:5px" width="10" height="6" viewBox="0 0 10 6"><path d="M1.5 1.5h7l-3.5 3.8z" fill="#fff"/><path d="M.8 .8h7l-3.5 3.8z" fill="#BDBDBD"/><path d="M1.6 1.3h5.4l-2.7 2.9z" fill="#E9E9E9"/></svg></div>
<div class="in" style="left:401px;top:825px;width:86px;height:20px"></div>
<div class="dd" style="left:469px;top:827px;height:16px"><svg style="left:4px;top:5px" width="10" height="6" viewBox="0 0 10 6"><path d="M1.5 1.5h7l-3.5 3.8z" fill="#fff"/><path d="M.8 .8h7l-3.5 3.8z" fill="#BDBDBD"/><path d="M1.6 1.3h5.4l-2.7 2.9z" fill="#E9E9E9"/></svg></div>
<div class="in g" style="left:313px;top:847px;width:85px"><span class="t r" style="right:2px;top:2px">$705.67</span></div>
<div class="in g" style="left:401px;top:847px;width:85px"><span class="t r" style="right:2px;top:2px">$0.00</span></div>
<span class="t r" style="right:49.5px;top:831px;transform:scaleX(0.96)">Total</span>
<div class="in g" style="left:782px;top:847px;width:97px"><span class="t r" style="right:2px;top:2px">$6,133.87</span></div>
</div>
<!-- STATUS BAR -->
<div id="sb">
<div class="a" style="left:904px;top:158px;width:17px;height:715px;background:#fff;box-sizing:border-box;border-left:1px solid #A0A0A0;border-right:1px solid #A0A0A0"></div>
<div class="a" style="left:904px;top:142px;width:17px;height:16px;box-sizing:border-box;background:#F0F0F0;box-shadow:inset 1px 1px 0 #fff,inset -1px -1px 0 #696969,inset -2px -2px 0 #A0A0A0"></div>
<div class="a" style="left:904px;top:158px;width:17px;height:202px;box-sizing:border-box;background:#F0F0F0;box-shadow:inset 1px 1px 0 #fff,inset -1px -1px 0 #696969,inset -2px -2px 0 #A0A0A0"></div>
<div class="a" style="left:904px;top:873px;width:17px;height:16px;box-sizing:border-box;background:#F0F0F0;box-shadow:inset 1px 1px 0 #fff,inset -1px -1px 0 #696969,inset -2px -2px 0 #A0A0A0"></div>
<svg style="left:908px;top:147px" width="8" height="5" viewBox="0 0 8 5"><path d="M0 4.5L3.8 .5L7.6 4.5z" fill="#000"/></svg>
<svg style="left:908px;top:879px" width="8" height="5" viewBox="0 0 8 5"><path d="M0 .5L3.8 4.5L7.6 .5z" fill="#000"/></svg>
<div class="a" style="left:2px;top:897px;width:925px;height:1px;background:#fff"></div>
<span class="t" style="left:7.5px;top:899px;transform:scaleX(0.864)">| Sample Company</span>
<div class="sep" style="left:599px"></div>
<div class="sep" style="left:671px"></div>
<div class="sep" style="left:718px"></div>
<div class="sep" style="left:749px"></div>
<div class="sep" style="left:780px"></div>
<div class="sep" style="left:811px"></div>
<div class="sep" style="left:841px"></div>
<div class="sep" style="left:876px"></div>
<span class="t" style="left:603px;top:899px">Jan 18, 2017</span>
<span class="t" style="left:674.8px;top:899px">201701</span>
<span class="t" style="left:844.8px;top:899px">Num</span>
<span class="t dt" style="left:881px;top:899px;transform:scaleX(0.866)">Caps</span>
<svg style="left:719px;top:900px" width="106" height="12" viewBox="0 0 106 12">
<rect x=".5" y="1" width="12.5" height="10" fill="#1C3F94"/><rect x="8" y="2" width="4" height="4" fill="#F4F6FF"/><path d="M2 7.5h4.5M2 9.5h4.5M8 8.5h4" stroke="#0A1020" stroke-width="1.2"/><rect x="1.5" y="1.8" width="4.5" height="1.2" fill="#E8D870"/>
<rect x="31.5" y="1.5" width="12.5" height="10" fill="#fff" stroke="#4A1A10" stroke-width="1"/><rect x="31" y="1" width="13.5" height="3.8" fill="#A82020"/><rect x="32.5" y="2.6" width="4" height="1.4" fill="#F2D0D0"/><path d="M34 0v2M37.7 0v2M41.4 0v2" stroke="#3A3A3A" stroke-width="1.3"/>
<text x="37.8" y="11.2" font-family="Liberation Sans, sans-serif" font-size="8.5" font-weight="bold" text-anchor="middle" fill="#000" textLength="10" lengthAdjust="spacingAndGlyphs">10</text>
<path d="M61.5 1.5h9l3 3v7h-12z" fill="#FDFDFD" stroke="#9A9A9A" stroke-width=".8"/><path d="M67.5 8.5l1-2.5l6-5.5l1.5 1.5l-6 5.5z" fill="#F2B02A" stroke="#A8700C" stroke-width=".4"/><path d="M74.2 .8l1.6 1.6" stroke="#D83A3A" stroke-width="1.8"/>
<rect x="93" y=".5" width="11.5" height="11" rx="1" fill="#3F6DB2" stroke="#2A4E8C" stroke-width=".6"/><rect x="102" y=".5" width="3" height="11" fill="#C9D3E2"/><rect x="93" y=".5" width="1.5" height="11" fill="#2A4E8C"/>
<text x="98.2" y="9.8" font-family="Liberation Sans, sans-serif" font-size="9" font-weight="bold" text-anchor="middle" fill="#fff">?</text>
</svg>
<svg style="left:914px;top:899px" width="13" height="13" viewBox="0 0 13 13"><path d="M12 2L2 12M12 5.5L5.5 12M12 9L9 12" stroke="#A0A0A0" stroke-width="1.2"/><path d="M12.5 3L3 12.5M12.5 6.5L6.5 12.5M12.5 10L10 12.5" stroke="#fff" stroke-width=".8"/></svg>
</div>

<!-- window border -->
<div class="a" style="left:0;top:0;width:929px;height:1px;background:#1883D7"></div>
<div class="a" style="left:0;top:0;width:1px;height:914px;background:#1883D7"></div>
<div class="a" style="left:1px;top:0;width:1px;height:914px;background:#1883D7;opacity:.3"></div>
<div class="a" style="left:928px;top:0;width:1px;height:914px;background:#1883D7"></div>
<div class="a" style="left:927px;top:0;width:1px;height:914px;background:#1883D7;opacity:.3"></div>
<div class="a" style="left:0;top:913px;width:929px;height:1px;background:#1883D7"></div>
<div class="a" style="left:0;top:912px;width:929px;height:1px;background:#1883D7;opacity:.45"></div>
</body>
</html>
